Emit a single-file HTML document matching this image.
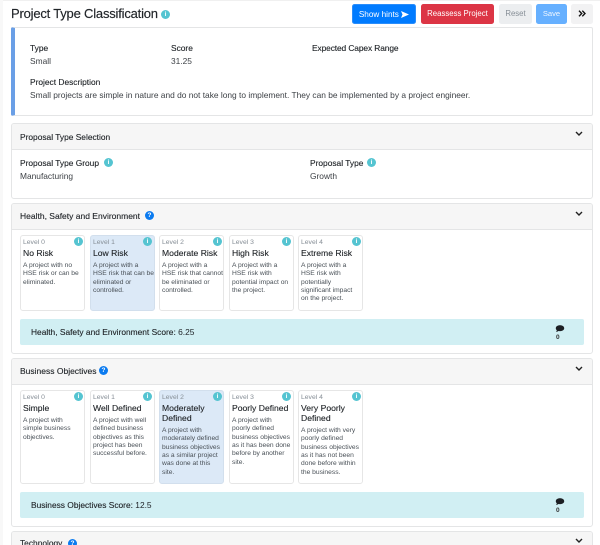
<!DOCTYPE html>
<html><head><meta charset="utf-8"><style>
html,body{margin:0;padding:0;width:600px;height:545px;overflow:hidden;background:#fff;font-family:"Liberation Sans",sans-serif;color:#3d4146;font-size:8.4px}
#w{position:relative;width:600px;height:545px;overflow:hidden}
.a{position:absolute;white-space:nowrap;line-height:10px}
.b{font-weight:400;color:#212529;-webkit-text-stroke:.12px #212529}
.box{position:absolute;box-sizing:border-box}
.card{border:1px solid #e4e5e6;border-radius:3px;background:#fff;left:11px;width:582px;overflow:hidden}
.hd{position:absolute;left:0;right:0;top:0;background:#f6f6f6;border-bottom:1px solid #e4e5e6;box-sizing:border-box}
.btn{position:absolute;top:4px;height:20px;border-radius:2.5px;text-align:center;line-height:20px;font-size:8px;box-sizing:border-box}
.lv{position:absolute;box-sizing:border-box;border:1px solid #e6e6e6;border-radius:3px;background:#fff;width:65px}
.lv.s{background:#dce9f7;border-color:#d2dfed}
.lv .l{position:absolute;left:2px;top:2px;font-size:6.8px;line-height:9px;color:#868e96;white-space:nowrap}
.lv .t{position:absolute;left:2px;top:12px;font-size:8.6px;line-height:10px;color:#212529;width:62px;-webkit-text-stroke:.12px #212529}
.lv .d{position:absolute;left:2px;font-size:6.7px;line-height:8.35px;color:#495057;white-space:nowrap}
.i{position:absolute;width:9px;height:9px;border-radius:50%;background:#55c4d1;color:#fff;font-size:6.5px;line-height:9px;text-align:center;font-weight:700}
.q{background:#0b7bf0}
.score{position:absolute;left:20px;width:564px;height:26px;background:#d1eff3;border-radius:2px}
</style></head><body><div id="w">
<div class="box" style="left:0;top:0;width:600px;height:1px;background:#f0f0f0"></div>
<div class="box" style="left:0;top:0;width:3px;height:545px;background:#f8f8f8"></div>

<div class="a" style="left:11px;top:5px;font-size:13px;line-height:17px;letter-spacing:-.2px;color:#212529;-webkit-text-stroke:.15px #212529">Project Type Classification</div>
<div class="i" style="left:161px;top:10px">i</div>

<div class="btn" style="left:352px;width:64px;background:#007bff;color:#fff;border:1px solid #2a8dfa;font-size:8.2px">Show hints <svg width="8" height="7" viewBox="0 0 8 7" style="vertical-align:-0.5px"><path d="M0 0L8 3.5L0 7L1.5 3.5Z" fill="#fff"/></svg></div>
<div class="btn" style="left:421px;width:73px;background:#dc3545;color:#fff;font-size:7.8px">Reassess Project</div>
<div class="btn" style="left:499px;width:33px;background:#eceef0;color:#868e96;font-size:7.8px">Reset</div>
<div class="btn" style="left:536px;width:31px;background:#66b0ff;color:#f0f7ff;font-size:7.6px">Save</div>
<div class="btn" style="left:571px;width:22px;background:#f2f2f3;color:#111"><svg width="8" height="7" viewBox="0 0 8 7" style="vertical-align:-0.5px"><path d="M1 .7L3.700 3.500L1 6.300M4.300 .7L7 3.500L4.300 6.300" fill="none" stroke="#111" stroke-width="1.400"/></svg></div>

<div class="box" style="left:11px;top:27px;width:582px;height:89px;border:1px solid #e4e5e6;border-left:4px solid #6a9fe6;border-radius:2px;background:#fff"></div>
<div class="a b" style="left:30px;top:43px">Type</div>
<div class="a" style="left:30px;top:56px">Small</div>
<div class="a b" style="left:171px;top:43px">Score</div>
<div class="a" style="left:171px;top:56px">31.25</div>
<div class="a b" style="left:312px;top:43px;letter-spacing:-.1px">Expected Capex Range</div>
<div class="a b" style="left:30px;top:77px">Project Description</div>
<div class="a" style="left:30px;top:90px">Small projects are simple in nature and do not take long to implement. They can be implemented by a project engineer.</div>

<div class="box card" style="top:123px;height:76px"><div class="hd" style="height:26px"></div></div>
<div class="a b" style="left:20px;top:132px">Proposal Type Selection</div>
<div class="a b" style="left:20px;top:158px">Proposal Type Group</div>
<div class="i" style="left:104px;top:158px">i</div>
<div class="a" style="left:20px;top:171px">Manufacturing</div>
<div class="a b" style="left:310px;top:158px">Proposal Type</div>
<div class="i" style="left:367px;top:158px">i</div>
<div class="a" style="left:310px;top:171px">Growth</div>
<svg class="box" style="left:575px;top:131px" width="8" height="6" viewBox="0 0 8 6"><path d="M1 1L4 4L7 1" fill="none" stroke="#222" stroke-width="1.4"/></svg>

<div class="box card" style="top:203px;height:151px"><div class="hd" style="height:26px"></div></div>
<div class="a b" style="left:20px;top:211px;font-size:8.5px">Health, Safety and Environment</div>
<div class="i q" style="left:145px;top:211px">?</div>
<svg class="box" style="left:575px;top:211px" width="8" height="6" viewBox="0 0 8 6"><path d="M1 1L4 4L7 1" fill="none" stroke="#222" stroke-width="1.4"/></svg>

<div class="lv" style="left:20px;top:235px;height:76px"><div class="l">Level 0</div><div class="t">No Risk</div><div class="d" style="top:26px">A project with no<br>HSE risk or can be<br>eliminated.</div></div>
<div class="lv s" style="left:90px;top:235px;height:76px"><div class="l">Level 1</div><div class="t">Low Risk</div><div class="d" style="top:26px">A project with a<br>HSE risk that can be<br>eliminated or<br>controlled.</div></div>
<div class="lv" style="left:159px;top:235px;height:76px"><div class="l">Level 2</div><div class="t">Moderate Risk</div><div class="d" style="top:26px">A project with a<br>HSE risk that cannot<br>be eliminated or<br>controlled.</div></div>
<div class="lv" style="left:229px;top:235px;height:76px"><div class="l">Level 3</div><div class="t">High Risk</div><div class="d" style="top:26px">A project with a<br>HSE risk with<br>potential impact on<br>the project.</div></div>
<div class="lv" style="left:298px;top:235px;height:76px"><div class="l">Level 4</div><div class="t">Extreme Risk</div><div class="d" style="top:26px">A project with a<br>HSE risk with<br>potentially<br>significant impact<br>on the project.</div></div>
<div class="i" style="left:74px;top:237px">i</div><div class="i" style="left:143px;top:237px">i</div><div class="i" style="left:213px;top:237px">i</div><div class="i" style="left:282px;top:237px">i</div><div class="i" style="left:352px;top:237px">i</div>

<div class="score" style="top:319px"></div>
<div class="a" style="left:31px;top:327px;color:#212529"><span style="-webkit-text-stroke:.12px #212529">Health, Safety and Environment Score:</span> 6.25</div>
<svg class="box" style="left:555px;top:325px" width="10" height="8" viewBox="0 0 10 8"><path d="M5 .3C2.400 .3 .8 1.600 .8 3.200C.8 4 1.200 4.700 1.800 5.200C1.700 6 1.200 6.700 .9 7C1.900 6.900 2.800 6.500 3.400 6C3.900 6.100 4.400 6.100 5 6.100C7.600 6.100 9.200 4.800 9.200 3.200C9.200 1.600 7.600 .3 5 .3Z" fill="#1c1f23"/></svg>
<div class="a" style="left:556px;top:334px;font-size:6.5px;line-height:8px;color:#333;font-weight:700">0</div>

<div class="box card" style="top:358px;height:169px"><div class="hd" style="height:26px"></div></div>
<div class="a b" style="left:20px;top:366px;font-size:8.500px">Business Objectives</div>
<div class="i q" style="left:99px;top:366px">?</div>
<svg class="box" style="left:575px;top:366px" width="8" height="6" viewBox="0 0 8 6"><path d="M1 1L4 4L7 1" fill="none" stroke="#222" stroke-width="1.4"/></svg>

<div class="lv" style="left:20px;top:390px;height:94px"><div class="l">Level 0</div><div class="t">Simple</div><div class="d" style="top:26px">A project with<br>simple business<br>objectives.</div></div>
<div class="lv" style="left:90px;top:390px;height:94px"><div class="l">Level 1</div><div class="t">Well Defined</div><div class="d" style="top:26px">A project with well<br>defined business<br>objectives as this<br>project has been<br>successful before.</div></div>
<div class="lv s" style="left:159px;top:390px;height:94px"><div class="l">Level 2</div><div class="t">Moderately Defined</div><div class="d" style="top:36px">A project with<br>moderately defined<br>business objectives<br>as a similar project<br>was done at this<br>site.</div></div>
<div class="lv" style="left:229px;top:390px;height:94px"><div class="l">Level 3</div><div class="t">Poorly Defined</div><div class="d" style="top:26px">A project with<br>poorly defined<br>business objectives<br>as it has been done<br>before by another<br>site.</div></div>
<div class="lv" style="left:298px;top:390px;height:94px"><div class="l">Level 4</div><div class="t">Very Poorly Defined</div><div class="d" style="top:36px">A project with very<br>poorly defined<br>business objectives<br>as it has not been<br>done before within<br>the business.</div></div>
<div class="i" style="left:74px;top:392px">i</div><div class="i" style="left:143px;top:392px">i</div><div class="i" style="left:213px;top:392px">i</div><div class="i" style="left:282px;top:392px">i</div><div class="i" style="left:352px;top:392px">i</div>

<div class="score" style="top:492px"></div>
<div class="a" style="left:31px;top:500px;color:#212529"><span style="-webkit-text-stroke:.12px #212529">Business Objectives Score:</span> 12.5</div>
<svg class="box" style="left:555px;top:498px" width="10" height="8" viewBox="0 0 10 8"><path d="M5 .3C2.400 .3 .8 1.600 .8 3.200C.8 4 1.200 4.700 1.800 5.200C1.700 6 1.200 6.700 .9 7C1.900 6.900 2.800 6.500 3.400 6C3.900 6.100 4.400 6.100 5 6.100C7.600 6.100 9.200 4.800 9.200 3.200C9.200 1.600 7.600 .3 5 .3Z" fill="#1c1f23"/></svg>
<div class="a" style="left:556px;top:507px;font-size:6.5px;line-height:8px;color:#333;font-weight:700">0</div>

<div class="box card" style="top:531px;height:14px;border-bottom:0;border-radius:3px 3px 0 0"><div class="hd" style="height:26px"></div></div>
<div class="a b" style="left:20px;top:538px">Technology</div>
<div class="i q" style="left:68px;top:539px">?</div>
<svg class="box" style="left:575px;top:538px" width="8" height="6" viewBox="0 0 8 6"><path d="M1 1L4 4L7 1" fill="none" stroke="#222" stroke-width="1.4"/></svg>
</div></body></html>
